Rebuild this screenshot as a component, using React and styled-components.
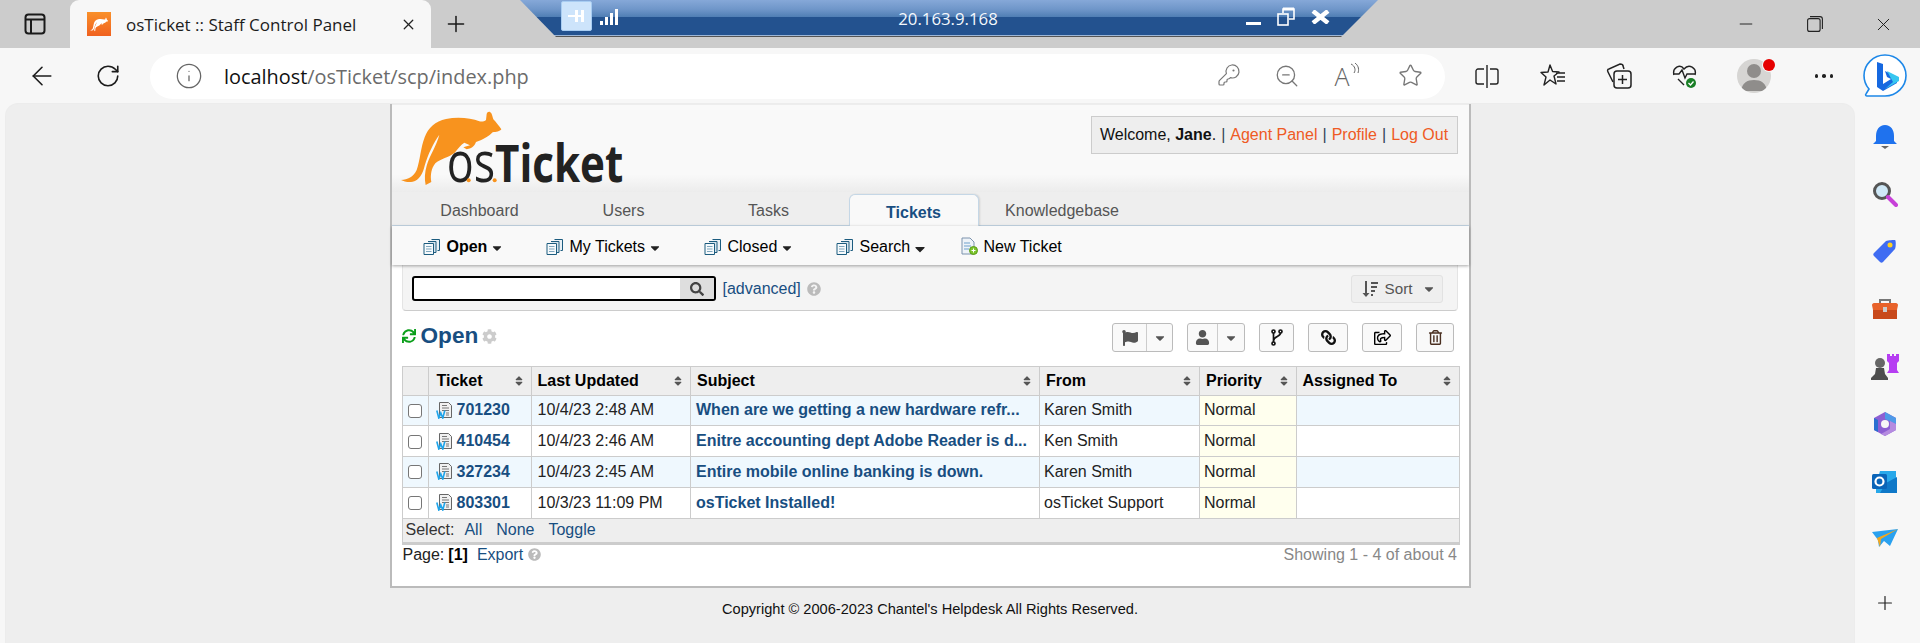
import React from "react";
import styled, { createGlobalStyle } from "styled-components";
import { ArrowLeft, RotateCw, Info, KeyRound, ZoomOut, Star, Plus, X, Minus } from "lucide-react";
import { FaFlag, FaUser, FaLink, FaRegShareSquare, FaRegTrashAlt, FaSort, FaSearch, FaQuestionCircle, FaCog, FaSync, FaCaretDown } from "react-icons/fa";

const Global = createGlobalStyle`
  html, body { margin: 0; padding: 0; height: 100%; overflow: hidden; background: #f7f7f7; }
  #root { height: 100%; }
  * { box-sizing: border-box; }
`;

const Shell = styled.div`position: relative; width: 1920px; height: 643px; display: flex; flex-direction: column; overflow: hidden; font-family: "Liberation Sans", Arial, sans-serif;`;
const TabStrip = styled.div`height: 48px; background: #cccccc; display: flex; align-items: stretch; flex: none;`;
const StripSlot = styled.div`width: ${p => p.$w}px; display: flex; align-items: center; justify-content: center; color: #1a1a1a; flex: none;`;
const BrowserTab = styled.div`width: 361px; background: #f7f7f7; border-radius: 9px 9px 0 0; display: flex; align-items: center; padding-left: 17px; flex: none;`;
const Favicon = styled.div`width: 24px; height: 24px; background: linear-gradient(#f9902a, #f0611f); display: flex; align-items: center; justify-content: center; flex: none;`;
const TabTitle = styled.span`font-family: "Open Sans", "Noto Sans", sans-serif; font-size: 17px; color: #1c1c1c; margin-left: 15px; flex: 1; white-space: nowrap;`;
const TabClose = styled.span`width: 46px; display: flex; justify-content: center; color: #222;`;
const WindowControls = styled.div`margin-left: auto; display: flex; padding-right: 4px;`;

const RemoteBar = styled.div`
  position: absolute; left: 520px; top: 0; width: 858px; height: 37px;
  clip-path: polygon(0 0, 100% 0, 821px 100%, 36px 100%);
  background: linear-gradient(#86a8d8 0, #6f96c9 25%, #4f7eb4 46%, #23528f 47%, #23528f 94%, #9db6d6 95%, #9db6d6 97%, #555 97%);
  display: flex; align-items: flex-start; color: #fff; padding-left: 41px;
`;
const PinButton = styled.div`width: 31px; height: 30px; margin-top: 1px; background: #cde4fb; border: 1px solid #a8cdf2; border-radius: 2px; display: flex; align-items: center; justify-content: center;`;
const Signal = styled.div`margin-left: 8px; margin-top: 8px; display: flex; align-items: flex-end; gap: 2px; height: 17px;`;
const SignalBar = styled.i`display: block; width: 3px; height: ${p => p.$h}px; background: #fff;`;
const RemoteIp = styled.div`flex: 1; text-align: center; font-family: "Open Sans", sans-serif; font-size: 16.8px; padding-left: 32px; line-height: 38px; color: #f4f8fd;`;
const RemoteActions = styled.div`display: flex; align-items: flex-start; margin-right: 48px; padding-top: 10px; gap: 16px;`;
const RemoteMin = styled.i`display: block; width: 15px; height: 3px; background: #fff; margin-top: 12px;`;
const RemoteRestore = styled.svg`margin-top: -3px; display: block;`;

const Toolbar = styled.div`height: 56px; background: #f7f7f7; display: flex; align-items: center; flex: none;`;
const ToolSlot = styled.div`width: ${p => p.$w}px; height: 44px; display: flex; align-items: center; justify-content: center; color: #1c1c1c; flex: none; position: relative;`;
const BackSlot = styled(ToolSlot)`padding-left: 9px;`;
const AddressBar = styled.div`width: 1295px; height: 45px; margin: 0 9px; background: #fff; border-radius: 23px; display: flex; align-items: center; padding: 0 3px 0 25px; flex: none;`;
const Url = styled.div`font-family: "Open Sans", "Noto Sans", sans-serif; font-size: 19.9px; margin-left: 21px; color: #6b6b6b; white-space: nowrap; flex: 1;`;
const UrlHost = styled.span`color: #111;`;
const AddrIcons = styled.div`display: flex; color: #777;`;
const AddrSlot = styled.div`width: ${p => p.$w}px; display: flex; justify-content: center;`;
const ReadAloud = styled.span`font-family: "Open Sans", sans-serif; font-weight: 300; font-size: 25px; color: #666; line-height: 26px; display: flex;`;
const Avatar = styled.div`width: 34px; height: 34px; border-radius: 50%; background: #d6d5d3; overflow: hidden; display: flex; align-items: center; justify-content: center;`;
const RedDot = styled.i`position: absolute; right: 15px; top: 5px; width: 12px; height: 12px; border-radius: 50%; background: #e60000; box-shadow: 0 0 0 1px #f7f7f7;`;
const Dots = styled.div`display: flex; gap: 4px;`;
const Dot = styled.i`display: block; width: 3.5px; height: 3.5px; border-radius: 50%; background: #222;`;

const Body = styled.div`flex: 1; display: flex; min-height: 0; background: #f7f7f7;`;
const Viewport = styled.div`margin-left: 6px; width: 1848px; background: #eeeeee; border-radius: 12px 12px 0 0; display: flex; justify-content: center; flex: none; box-shadow: 0 0 0 1px #ececec;`;
const Sidebar = styled.aside`flex: 1; display: flex; flex-direction: column; align-items: center; padding-top: 4px; padding-right: 4px;`;
const SideSlot = styled.div`height: 57.5px; display: flex; align-items: center; justify-content: center; flex: none; margin-top: ${p => p.$mt || 0}px;`;

const Page = styled.div`width: 1081px; height: 100%; display: flex; flex-direction: column; font-size: 16px; color: #000;`;
const Card = styled.div`height: 484px; background: #fff; border: solid #bbbbbb; border-width: 0 2px 2px 2px; display: flex; flex-direction: column; flex: none;`;
const Header = styled.header`height: 88px; flex: none; position: relative; background: linear-gradient(#f9f9f9 0, #f9f9f9 80%, #ececec 100%); border-top: 1px solid #ededed; display: flex; justify-content: space-between; padding: 11px 11px 0 4px;`;
const Logo = styled.svg`width: 234px; height: 88px; margin-top: -12px; flex: none; display: block; overflow: visible;`;
const Welcome = styled.div`height: 38px; width: 367px; background: #eeeeee; border: 1px solid #ccc; display: flex; align-items: center; justify-content: center; white-space: nowrap; color: #111;`;
const OrangeLink = styled.a`color: #ef5a24; text-decoration: none;`;
const Sep = styled.span`margin: 0 5px; color: #345;`;

const Nav = styled.nav`height: 34px; flex: none; background: #eeeeee; border-bottom: 1px solid #c5d7e6; display: flex; align-items: flex-end; padding-left: 22px; gap: 15px; position: relative;`;
const NavTab = styled.a`
  width: 130px; height: 33px; text-align: center; line-height: 38px; color: #555; font-size: 16px; padding-left: ${p => p.$pl || 0}px;
  ${p => p.$active && `color: #184e81; font-weight: 700; background: #f9f9f9; border: 1px solid #c5d7e6; border-bottom: 0; border-radius: 6px 6px 0 0; margin-bottom: -1px; height: 32px; line-height: 35px; box-shadow: 1px 0 2px rgba(0,0,0,.12);`}
`;
const SubNav = styled.div`height: 39px; flex: none; background: #f9f9f9; display: flex; align-items: center; padding-top: 2px; box-shadow: 0 1px 3px rgba(0,0,0,.35); position: relative; color: #000;`;
const SubItem = styled.a`display: flex; align-items: center; width: ${p => p.$w}px; padding-left: ${p => p.$pl || 0}px; font-weight: ${p => (p.$bold ? 700 : 400)}; flex: none; white-space: nowrap;`;
const SubLabel = styled.span`margin-left: 6px;`;
const Caret = styled.span`display: inline-flex; margin-left: ${p => p.$ml ?? 3}px; color: #222; margin-top: ${p => p.$mt || 0}px;`;

const Content = styled.main`flex: 1; padding: 0 10.5px 0 10px; display: flex; flex-direction: column;`;
const SearchPanel = styled.div`height: 46px; background: #f4f4f4; border-bottom: 1px solid #ccc; border-right: 1px solid #e4e4e4; border-left: 1px solid #e4e4e4; border-radius: 0 0 4px 4px; display: flex; align-items: center; padding: 2px 14px 0 9px; flex: none;`;
const SearchBox = styled.div`width: 304px; height: 25px; border: 2px solid #000; border-radius: 3px; background: #fff; display: flex; justify-content: flex-end; overflow: hidden;`;
const SearchBtn = styled.div`width: 34px; background: #dedede; color: #444; display: flex; align-items: center; justify-content: center;`;
const Advanced = styled.a`margin-left: 7px; color: #184e81; white-space: nowrap;`;
const HelpMark = styled.span`display: inline-flex; margin-left: 6px; color: #bbb;`;
const PagerHelp = styled(HelpMark)`margin-left: 5px; vertical-align: -1px;`;
const SortBtn = styled.div`margin-left: auto; width: 92px; height: 28px; background: #efefef; border: 1px solid #e2e2e2; border-radius: 3px; display: flex; align-items: center; justify-content: center; gap: 7px; padding-left: 4px; color: #555; font-size: 15.2px;`;

const TitleRow = styled.div`height: 55px; flex: none; display: flex; align-items: flex-start; justify-content: space-between; padding: 12px 4px 0 0;`;
const Heading = styled.div`display: flex; align-items: center; height: 26px; color: #184e81;`;
const HeadingText = styled.h2`margin: 0 4px 0 5px; font-size: 22.6px; font-weight: 700; color: #184e81;`;
const ActionRow = styled.div`display: flex; gap: 14px;`;
const ActionBtn = styled.div`height: 29px; width: ${p => p.$w}px; border: 1px solid #bbb; border-radius: 3px; background: #f9f9f9; display: flex; align-items: center; justify-content: center; color: ${p => p.$c || "#111"}; flex: none;`;
const ActionMain = styled.span`flex: 1; height: 100%; display: flex; align-items: center; justify-content: center; border-right: 1px solid #ccc;`;
const ActionDrop = styled.span`width: ${p => p.$w}px; display: flex; align-items: center; justify-content: center; color: #555;`;
const LinkGlyph = styled(FaLink)`transform: scaleX(-1);`;

const Table = styled.table`width: 1056.5px; table-layout: fixed; border-collapse: collapse; flex: none;`;
const Th = styled.th`height: 28.5px; background: #eeeeee; border: 1px solid #ccc; padding: 0 5px 0 ${p => p.$pl ?? 6}px; text-align: left; font-size: 16px; font-weight: 700; color: #000;`;
const ThInner = styled.div`display: flex; justify-content: space-between; align-items: center; color: #000;`;
const SortMark = styled.span`display: inline-flex; color: #555; margin-right: 1px;`;
const Tr = styled.tr`background: ${p => (p.$alt ? "#eff8fe" : "#fff")};`;
const Td = styled.td`height: 30.75px; border: 1px solid #ccc; padding: 0 5px 0 ${p => p.$pl ?? 5}px; white-space: nowrap; overflow: hidden; font-size: 16px; color: #222; ${p => p.$prio && "background: #ffffee;"}`;
const CheckCell = styled.td`border: 1px solid #ccc; padding: 0; text-align: center;`;
const Check = styled.input`appearance: none; display: block; margin: 1px auto 0; width: 14px; height: 14px; border: 1px solid #767676; border-radius: 3px; background: #fff;`;
const TicketLink = styled.a`display: flex; align-items: center; gap: 4px; color: #184e81; font-weight: 700; padding-left: 2px;`;
const Subject = styled.a`color: #184e81; font-weight: 700;`;
const FootRow = styled.td`height: 25px; background: #eeeeee; border: 1px solid #ccc; border-bottom: 3px solid #ccc; padding: 0 3px; color: #333;`;
const SelLink = styled.a`color: #184e81; margin-left: ${p => p.$ml}px;`;
const Pager = styled.div`display: flex; justify-content: space-between; padding: 0 1px 0 1px; height: 21px; align-items: center; color: #222;`;
const PagerBold = styled.b`margin-left: 4px; color: #000;`;
const ExportLink = styled.a`color: #184e81; margin-left: 9px;`;
const Showing = styled.span`color: #888;`;
const Copyright = styled.footer`text-align: center; font-size: 14.6px; color: #111; padding-top: 13px;`;

const Copy = () => (
  <svg width="18" height="18" viewBox="0 0 18 18" fill="none">
    <path d="M8.500 1.500h8v11h-2" fill="#eaf1f6" stroke="#1c5c7f" />
    <path d="M5 3.500h8v11H11" fill="#d7e5ee" stroke="#1c5c7f" />
    <path d="M1 5.500h9.500v11H1z" fill="#f6fafc" stroke="#1c5c7f" />
    <path d="M3 8.500h5.500M3 11h5.500M3 13.500h5.500" stroke="#7ea6bd" />
  </svg>
);
const NewTicket = () => (
  <svg width="17" height="19" viewBox="0 0 17 19" fill="none">
    <path d="M1 1h8l4 4v12H1z" fill="#eef3f8" stroke="#7c93ad" />
    <path d="M3 6h6M3 9h7M3 12h5" stroke="#6c9fcb" />
    <circle cx="12.500" cy="13.500" r="4" fill="#7cc52c" stroke="#5a9b18" />
    <path d="M10.500 13.500h4M12.500 11.500v4" stroke="#fff" />
  </svg>
);
const TicketIcon = () => (
  <svg width="17" height="17" viewBox="0 0 17 17" fill="none">
    <path d="M3.500 .5h9l3 3v12h-12z" fill="#f1f1f1" stroke="#666" />
    <path d="M6 3.500h5M6 6h7M6 8.500h7M10 11h3M10 13h3" stroke="#777" />
    <path d="M.8 8.500l2 7.500 2-5 2 5 2-7.500" stroke="#1ea4ea" strokeWidth="1.600" />
  </svg>
);
const ForkIcon = () => (
  <svg width="12" height="17" viewBox="0 0 12 17" fill="none" stroke="#111" strokeWidth="1.700">
    <circle cx="2.500" cy="2.500" r="1.500" />
    <circle cx="2.500" cy="14.500" r="1.500" />
    <circle cx="9.500" cy="2.500" r="1.500" />
    <path d="M2.500 4v9M9.500 4c0 4-7 3-7 8" />
  </svg>
);
const KANGAROO = "M15 228C35 226 52 220 62 198C72 172 74 130 86 100C96 72 118 52 150 45C185 38 225 42 250 52C258 54 265 52 270 48L272 30C274 22 282 20 286 28C289 34 290 40 292 46C300 55 310 66 316 76C312 82 300 84 290 85C280 95 262 108 240 114C236 124 230 133 212 136L202 130L222 124L205 116C195 122 186 134 176 146C160 160 132 164 118 178C106 192 102 215 106 234L89 243C85 225 86 205 92 185C100 155 122 125 130 92C112 118 96 150 86 185C81 208 70 228 50 233C38 236 25 233 15 228Z";

const Notifications = () => (
  <svg width="26" height="26" viewBox="0 0 26 26"><path d="M13 1c6 0 9 5 9 11v5l3 3H1l3-3v-5c0-6 3-11 9-11z" fill="#1f72ee" /><path d="M9 22h8l-4 3z" fill="#666" /></svg>
);
const SearchColor = () => (
  <svg width="26" height="26" viewBox="0 0 26 26"><circle cx="10" cy="10" r="7.500" fill="#cfe8f7" stroke="#555" strokeWidth="3" /><path d="M16 16l8 8" stroke="#c740d8" strokeWidth="4" strokeLinecap="round" /></svg>
);
const TagColor = () => (
  <svg width="26" height="26" viewBox="0 0 26 26"><path d="M2 14L14 2c2-1 8-1 9-1s1 7 0 9L11 23c-1 1-2 1-3 0l-6-6c-1-1-1-2 0-3z" fill="#3f6cf2" /><circle cx="18" cy="6" r="2.500" fill="#ffd21f" /></svg>
);
const Toolbox = () => (
  <svg width="28" height="22" viewBox="0 0 28 22"><path d="M9 6V2h10v4" fill="none" stroke="#777" strokeWidth="2" /><path d="M1 7c0-1 1-2 2-2h22c1 0 2 1 2 2l-1 5H2z" fill="#e8622a" /><path d="M2 12h24v9H2z" fill="#c8491b" /><rect x="12" y="9" width="4" height="5" fill="#ccc" /></svg>
);
const Chess = () => (
  <svg width="28" height="28" viewBox="0 0 28 28"><path d="M16 1h3v2h2V1h2v2h2V1h3v7l-2 2v7l2 3H16l2-3V10l-2-2z" fill="#b63ef2" /><circle cx="9" cy="10" r="5" fill="#666" /><path d="M5 15h8l1 6 3 4v2H0v-2l4-4z" fill="#4d4d4d" /></svg>
);
const Office = () => (
  <svg width="26" height="26" viewBox="0 0 26 26"><path d="M13 1l11 6v12l-11 6L2 19V7z" fill="#8d5fd3" /><path d="M13 1l11 6v6L13 8z" fill="#4f9ae8" /><path d="M2 7l4 2v12l-4-2z" fill="#2a6fd0" /><path d="M24 13v6l-11 6-4-2 9-5v-8z" fill="#b58be0" /><circle cx="13" cy="13" r="4" fill="#f7f7f7" /></svg>
);
const Outlook = () => (
  <svg width="26" height="26" viewBox="0 0 26 26"><path d="M8 2h16v22H4V16z" fill="#28a8ea" /><path d="M14 14l11-6v16H8z" fill="#0f78c8" /><rect x="0" y="5" width="15" height="15" rx="1.500" fill="#0a64b8" /><circle cx="7.500" cy="12.500" r="4" fill="none" stroke="#fff" strokeWidth="2.200" /></svg>
);
const SendIcon = () => (
  <svg width="27" height="20" viewBox="0 0 27 20"><path d="M0 3l26-3-8 17-6-5-5 6-1-7z" fill="#2aa1ef" /><path d="M5 9l21-9-17 10-1 8z" fill="#f2a71e" /></svg>
);
const BingLogo = () => (
  <svg width="46" height="46" viewBox="0 0 46 46" fill="none">
    <path d="M23 2c11.600 0 21 9.400 21 20.500S34.600 43 23 43H5c-1 0-2-1-1-2l3-5C3.500 32 2 27.500 2 22.500 2 11.400 11.400 2 23 2z" fill="#fff" stroke="#1e88e8" strokeWidth="1.600" />
    <path d="M15 9l6 2v20l8-5-4-2-2-6 12 6v6l-14 8-6-4z" fill="#1668e0" />
    <path d="M25 18l12 6v4l-14 8 8-7z" fill="#37c6f0" />
  </svg>
);
const Health = () => (
  <svg width="26" height="26" viewBox="0 0 26 26" fill="none">
    <path d="M2 12C0 5 8 0 12 6c5-6 13-1 11 6M1 11h6l3-4 3 8 2-4h8M6 16l6 6" stroke="#222" strokeWidth="1.400" />
    <circle cx="19" cy="20" r="5" fill="#1a7f27" />
    <path d="M16.500 20l2 2 3-3.500" stroke="#fff" strokeWidth="1.300" />
  </svg>
);
const rows = [
  ["701230", "10/4/23 2:48 AM", "When are we getting a new hardware refr...", "Karen Smith", true],
  ["410454", "10/4/23 2:46 AM", "Enitre accounting dept Adobe Reader is d...", "Ken Smith", false],
  ["327234", "10/4/23 2:45 AM", "Entire mobile online banking is down.", "Karen Smith", true],
  ["803301", "10/3/23 11:09 PM", "osTicket Installed!", "osTicket Support", false],
];
const headers = ["Ticket", "Last Updated", "Subject", "From", "Priority", "Assigned To"];
const widths = [26, 103, 159.5, 349, 160, 96.5, 163];

export default function App() {
  return (
    <Shell>
      <Global />
      <TabStrip>
        <StripSlot $w={70}>
          <svg width="22" height="22" viewBox="0 0 22 22" fill="none" stroke="#1a1a1a" strokeWidth="2"><rect x="1.500" y="1.500" width="19" height="19" rx="3" /><path d="M1.500 6.500h19M7 6.500v14" /></svg>
        </StripSlot>
        <BrowserTab>
          <Favicon><svg width="20" height="16" viewBox="0 0 330 250"><path fill="#fff" d={KANGAROO} /></svg></Favicon>
          <TabTitle>osTicket :: Staff Control Panel</TabTitle>
          <TabClose><X size={17} strokeWidth={1.8} /></TabClose>
        </BrowserTab>
        <StripSlot $w={50}><Plus size={26} strokeWidth={1.4} /></StripSlot>
        <WindowControls>
          <StripSlot $w={68}><Minus size={20} strokeWidth={1.1} /></StripSlot>
          <StripSlot $w={70}>
            <svg width="16" height="16" viewBox="0 0 16 16" fill="none" stroke="#222" strokeWidth="1.100"><rect x=".6" y="2.600" width="12.500" height="12.800" rx="2" /><path d="M3 .6h10c1.500 0 2.400 1 2.400 2.400v10" /></svg>
          </StripSlot>
          <StripSlot $w={66}><X size={21} strokeWidth={1.1} /></StripSlot>
        </WindowControls>
      </TabStrip>
      <RemoteBar>
        <PinButton><svg width="18" height="14" viewBox="0 0 18 14" fill="#fff"><path d="M0 6h7V1h3v5h3V1h3v12h-3V8h-3v5H7V8H0z" /></svg></PinButton>
        <Signal><SignalBar $h={4} /><SignalBar $h={8} /><SignalBar $h={12} /><SignalBar $h={16} /></Signal>
        <RemoteIp>20.163.9.168</RemoteIp>
        <RemoteActions>
          <RemoteMin />
          <RemoteRestore width="18" height="19" viewBox="0 0 18 19" fill="none" stroke="#fff" strokeWidth="1.600"><rect x="1" y="7" width="10" height="11" /><path d="M6 6V2h11v10h-5" /><path d="M6 2h11" strokeWidth="3" /></RemoteRestore>
          <svg width="19" height="14" viewBox="0 0 19 14" fill="none" stroke="#fff" strokeWidth="4.500"><path d="M2 1l15 12M17 1L2 13" /></svg>
        </RemoteActions>
      </RemoteBar>
      <Toolbar>
        <BackSlot $w={75}><ArrowLeft size={30} strokeWidth={1.3} /></BackSlot>
        <ToolSlot $w={66}><RotateCw size={26} strokeWidth={1.5} /></ToolSlot>
        <AddressBar>
          <Info size={28} strokeWidth={1.1} color="#666" />
          <Url><UrlHost>localhost</UrlHost>/osTicket/scp/index.php</Url>
          <AddrIcons>
            <AddrSlot $w={56}><KeyRound size={24} strokeWidth={1.2} /></AddrSlot>
            <AddrSlot $w={59}><ZoomOut size={26} strokeWidth={1.2} /></AddrSlot>
            <AddrSlot $w={62}><ReadAloud>A<svg width="10" height="14" viewBox="0 0 10 14" fill="none" stroke="#666" strokeWidth="1"><path d="M1 1c4 2 5 6 3 9M5 0c4 3 4 7 3 10" /></svg></ReadAloud></AddrSlot>
            <AddrSlot $w={64}><Star size={25} strokeWidth={1.3} /></AddrSlot>
          </AddrIcons>
        </AddressBar>
        <ToolSlot $w={66}>
          <svg width="24" height="24" viewBox="0 0 24 24" fill="none" stroke="#222" strokeWidth="1.400"><path d="M9 5H3c-1 0-2 1-2 2v11c0 1 1 2 2 2h6M15 5h6c1 0 2 1 2 2v11c0 1-1 2-2 2h-6M12 1v23" /></svg>
        </ToolSlot>
        <ToolSlot $w={66}>
          <svg width="26" height="24" viewBox="0 0 26 24" fill="none" stroke="#222" strokeWidth="1.400" strokeLinejoin="round"><path d="M10 1l2.600 6.500L19 8l-5 4 2 8-6-4-6 5 2-8-5-4.500 7-.5zM16 9h9M17 13h8M17 17h8" /></svg>
        </ToolSlot>
        <ToolSlot $w={66}>
          <svg width="26" height="26" viewBox="0 0 26 26" fill="none" stroke="#222" strokeWidth="1.500"><path d="M7 19L2 9c-1-2 0-3 1-3l11-5c2 0 3 1 3 2l1 3" /><rect x="8" y="8" width="17" height="17" rx="3" fill="#f7f7f7" /><path d="M16.500 12v9M12 16.500h9" /></svg>
        </ToolSlot>
        <ToolSlot $w={66}><Health /></ToolSlot>
        <ToolSlot $w={72}>
          <Avatar>
            <svg width="34" height="34" viewBox="0 0 34 34" fill="#8f8d8b"><circle cx="17" cy="12" r="7" /><path d="M4 32c1-8 6-11 13-11s12 3 13 11z" /></svg>
          </Avatar>
          <RedDot />
        </ToolSlot>
        <ToolSlot $w={68}><Dots><Dot /><Dot /><Dot /></Dots></ToolSlot>
        <ToolSlot $w={54}><BingLogo /></ToolSlot>
      </Toolbar>
      <Body>
        <Viewport>
          <Page>
            <Card>
              <Header>
                <Logo viewBox="0 0 702 264">
                  <path fill="#f8931e" d={KANGAROO} />
                  <text x="152" y="234" fontFamily="Open Sans" fontSize="158" fontWeight="700" fill="#222" textLength="530" lengthAdjust="spacingAndGlyphs">
                    <tspan fontWeight="400" fontSize="168">os</tspan><tspan>Ticket</tspan>
                  </text>
                  <circle cx="218" cy="229" r="6" fill="#f8931e" />
                  <circle cx="296" cy="229" r="6" fill="#f8931e" />
                </Logo>
                <Welcome>
                  Welcome,&nbsp;<b>Jane</b>.<Sep>|</Sep><OrangeLink>Agent Panel</OrangeLink><Sep>|</Sep><OrangeLink>Profile</OrangeLink><Sep>|</Sep><OrangeLink>Log Out</OrangeLink>
                </Welcome>
              </Header>
              <Nav>
                <NavTab $pl={2}>Dashboard</NavTab>
                <NavTab>Users</NavTab>
                <NavTab>Tasks</NavTab>
                <NavTab $active>Tickets</NavTab>
                <NavTab $pl={7}>Knowledgebase</NavTab>
              </Nav>
              <SubNav>
                <SubItem $w={154} $pl={31} $bold><Copy /><SubLabel>Open</SubLabel><Caret $mt={2}><FaCaretDown size={14} /></Caret></SubItem>
                <SubItem $w={158}><Copy /><SubLabel>My Tickets</SubLabel><Caret $mt={2}><FaCaretDown size={14} /></Caret></SubItem>
                <SubItem $w={132}><Copy /><SubLabel>Closed</SubLabel><Caret $mt={2}><FaCaretDown size={14} /></Caret></SubItem>
                <SubItem $w={125}><Copy /><SubLabel>Search</SubLabel><Caret $mt={5} $ml={2}><FaCaretDown size={16} /></Caret></SubItem>
                <SubItem $w={120}><NewTicket /><SubLabel>New Ticket</SubLabel></SubItem>
              </SubNav>
              <Content>
                <SearchPanel>
                  <SearchBox><SearchBtn><FaSearch size={14} /></SearchBtn></SearchBox>
                  <Advanced>[advanced]</Advanced>
                  <HelpMark><FaQuestionCircle size={14} /></HelpMark>
                  <SortBtn>
                    <svg width="16" height="16" viewBox="0 0 16 16" fill="#555"><path d="M3 0h2v12h2.500L4 16 .5 12H3zM9 1h7v2H9zM9 5h6v2H9zM9 9h4v2H9zM9 13h2v2H9z" /></svg>
                    Sort
                    <Caret $ml={3} $mt={1}><FaCaretDown size={14} color="#555" /></Caret>
                  </SortBtn>
                </SearchPanel>
                <TitleRow>
                  <Heading>
                    <FaSync size={14} color="#0a9f1a" />
                    <HeadingText>Open</HeadingText>
                    <FaCog size={15} color="#ccc" />
                  </Heading>
                  <ActionRow>
                    <ActionBtn $w={61} $c="#555"><ActionMain><FaFlag size={16} /></ActionMain><ActionDrop $w={25}><FaCaretDown size={14} /></ActionDrop></ActionBtn>
                    <ActionBtn $w={58} $c="#555"><ActionMain><FaUser size={15} /></ActionMain><ActionDrop $w={26}><FaCaretDown size={14} /></ActionDrop></ActionBtn>
                    <ActionBtn $w={35}><ForkIcon /></ActionBtn>
                    <ActionBtn $w={40}><LinkGlyph size={15} /></ActionBtn>
                    <ActionBtn $w={40} $c="#000"><FaRegShareSquare size={17} /></ActionBtn>
                    <ActionBtn $w={38} $c="#4a2f20"><FaRegTrashAlt size={15} /></ActionBtn>
                  </ActionRow>
                </TitleRow>
                <Table>
                  <colgroup>{widths.map((w, i) => <col key={i} style={{ width: w }} />)}</colgroup>
                  <thead>
                    <tr>
                      <Th />
                      {headers.map((h, i) => <Th key={h} $pl={i === 0 ? 8 : 6}><ThInner>{h}<SortMark><FaSort size={12} /></SortMark></ThInner></Th>)}
                    </tr>
                  </thead>
                  <tbody>
                    {rows.map(r => (
                      <Tr key={r[0]} $alt={r[4]}>
                        <CheckCell><Check type="checkbox" readOnly /></CheckCell>
                        <Td><TicketLink><TicketIcon />{r[0]}</TicketLink></Td>
                        <Td $pl={6}>{r[1]}</Td>
                        <Td><Subject>{r[2]}</Subject></Td>
                        <Td $pl={4}>{r[3]}</Td>
                        <Td $pl={4} $prio>Normal</Td>
                        <Td />
                      </Tr>
                    ))}
                    <tr>
                      <FootRow colSpan={7}>Select:<SelLink $ml={10}>All</SelLink><SelLink $ml={14}>None</SelLink><SelLink $ml={14}>Toggle</SelLink></FootRow>
                    </tr>
                  </tbody>
                </Table>
                <Pager>
                  <span>Page:<PagerBold>[1]</PagerBold><ExportLink>Export</ExportLink><PagerHelp><FaQuestionCircle size={13} /></PagerHelp></span>
                  <Showing>Showing 1 - 4 of about 4</Showing>
                </Pager>
              </Content>
            </Card>
            <Copyright>Copyright © 2006-2023 Chantel's Helpdesk All Rights Reserved.</Copyright>
          </Page>
        </Viewport>
        <Sidebar>
          <SideSlot><Notifications /></SideSlot>
          <SideSlot><SearchColor /></SideSlot>
          <SideSlot><TagColor /></SideSlot>
          <SideSlot><Toolbox /></SideSlot>
          <SideSlot><Chess /></SideSlot>
          <SideSlot><Office /></SideSlot>
          <SideSlot><Outlook /></SideSlot>
          <SideSlot><SendIcon /></SideSlot>
          <SideSlot $mt={6}><Plus size={22} strokeWidth={1.3} color="#222" /></SideSlot>
        </Sidebar>
      </Body>
    </Shell>
  );
}
